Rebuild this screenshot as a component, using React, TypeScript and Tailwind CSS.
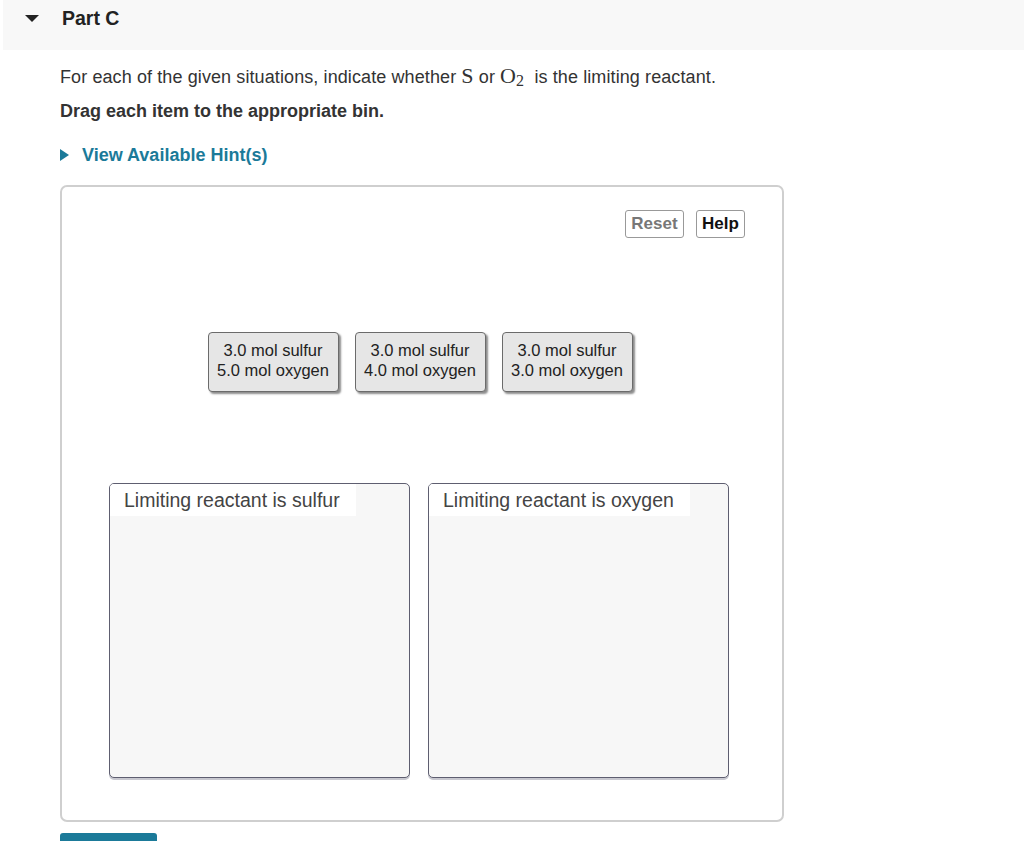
import React from "react";

const items = [
  ["3.0 mol sulfur", "5.0 mol oxygen"],
  ["3.0 mol sulfur", "4.0 mol oxygen"],
  ["3.0 mol sulfur", "3.0 mol oxygen"],
];

const serif = { fontFamily: '"Liberation Serif", "Times New Roman", serif' };

export default function App() {
  return (
    <div className="min-h-[841px] w-[1024px] bg-white text-[#222] overflow-hidden" style={{ fontFamily: '"Liberation Sans", Arial, sans-serif' }}>
      <div className="ml-[3px] h-[50px] bg-[#f8f8f8] flex items-start pt-[7px]">
        <svg className="ml-[22px] mt-[8px]" width="14" height="7" viewBox="0 0 14 7">
          <polygon points="0,0 14,0 7,7" fill="#222" />
        </svg>
        <span className="ml-[23px] text-[19.5px] font-bold leading-[22px]">Part C</span>
      </div>
      <div className="pl-[60px]">
        <p className="mt-[15px] text-[18px] leading-[22px] text-[#333] tracking-[0.1px]">
          For each of the given situations, indicate whether{" "}
          <span className="text-[22px]" style={serif}>S</span> or{" "}
          <span className="text-[22px]" style={serif}>O</span>
          <span className="text-[16px] relative top-[3px]" style={serif}>2</span>
          {"\u00a0 "}is the limiting reactant.
        </p>
        <p className="mt-[11px] text-[18px] leading-[22px] font-bold text-[#333]">Drag each item to the appropriate bin.</p>
        <div className="mt-[22px] flex items-center text-[18px] leading-[22px] font-bold text-[#1b7a99]">
          <svg width="9" height="12" viewBox="0 0 9 12" className="mr-[13px]">
            <polygon points="0,0 9,6 0,12" fill="#1b7a99" />
          </svg>
          View Available Hint(s)
        </div>
        <div className="mt-[19px] w-[724px] h-[637px] border-2 border-[#cfcfcf] rounded-[7px] flex flex-col">
          <div className="flex justify-end gap-[12px] pt-[23px] pr-[37px]">
            <div className="h-[28px] w-[59px] border border-[#999] rounded-[3px] flex items-center justify-center text-[17px] font-bold text-[#777]">Reset</div>
            <div className="h-[28px] w-[49px] border border-[#999] rounded-[3px] flex items-center justify-center text-[17px] font-bold text-[#111]">Help</div>
          </div>
          <div className="mt-[94px] flex justify-center gap-[16px] pr-[4px]">
            {items.map((it, i) => (
              <div key={i} className="w-[131px] h-[60px] pb-[4px] bg-[#e6e6e6] border-[1.5px] border-[#6b6b6b] rounded-[4px] shadow-[2px_2px_2px_rgba(0,0,0,0.45)] flex flex-col items-center justify-center text-[16.5px] leading-[20px] text-[#222]">
                <span>{it[0]}</span>
                <span>{it[1]}</span>
              </div>
            ))}
          </div>
          <div className="mt-[91px] flex justify-center gap-[18px] pr-[6px]">
            {["Limiting reactant is sulfur", "Limiting reactant is oxygen"].map((t) => (
              <div key={t} className="w-[301px] h-[295px] bg-[#f7f7f7] border-[1.5px] border-[#5e5e70] rounded-[5px] shadow-[0_2px_0_#c8c8d0]">
                <div className="inline-block bg-white pl-[14px] pr-[16px] h-[32px] leading-[32px] text-[19.5px] text-[#444] rounded-tl-[4px]">{t}</div>
              </div>
            ))}
          </div>
        </div>
        <div className="mt-[11px] w-[97px] h-[20px] bg-[#1b7a99] rounded-t-[3px]"></div>
      </div>
    </div>
  );
}
